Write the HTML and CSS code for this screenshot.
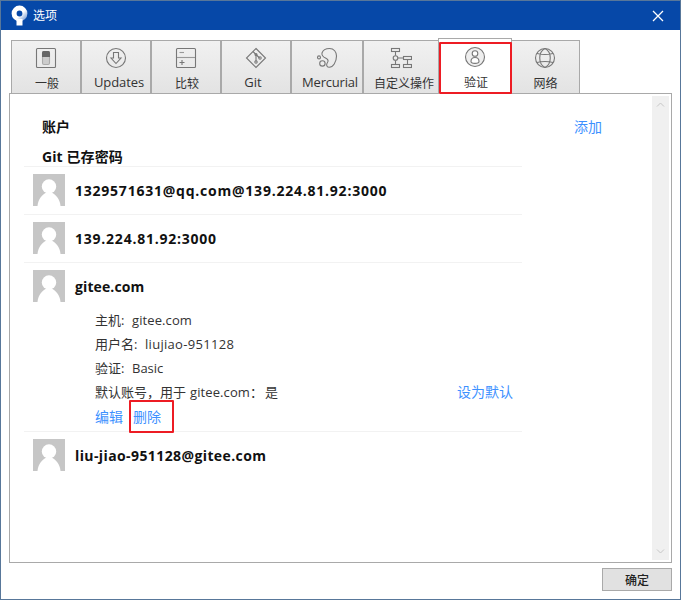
FILE: index.html
```
<!DOCTYPE html>
<html lang="zh-CN">
<head>
<meta charset="utf-8">
<title>选项</title>
<link rel="stylesheet" href="styles.css">
</head>
<body>
<svg class="defs" width="0" height="0" aria-hidden="true">
  <symbol id="avatar" viewBox="0 0 32 32"><rect width="32" height="32" fill="#c6c6c6"/><circle cx="16" cy="12.500" r="7.200" fill="#fff"/><path d="M4.500 32C5 25 9.500 20.500 12.500 19H19.500C22.500 20.500 27 25 27.500 32Z" fill="#fff"/></symbol>
</svg>
<div class="window">
  <header class="titlebar">
    <svg class="logo" width="18" height="22" viewBox="0 0 18 22"><defs><linearGradient id="lg" x1="0" y1="0" x2="1" y2="1"><stop offset=".6" stop-color="#fff"/><stop offset="1" stop-color="#8facda"/></linearGradient></defs><circle cx="8.500" cy="8.500" r="5.400" fill="none" stroke="url(#lg)" stroke-width="5"/><path d="M5.500 14H11.500V20.500H5.500Z" fill="#fff"/></svg>
    <span class="title">选项</span>
    <svg class="close" width="12" height="12" viewBox="0 0 12 12"><path d="M1 1L11 11M11 1L1 11" stroke="#fff" stroke-width="1.300"/></svg>
  </header>
  <nav class="tabs">
    <div class="tab"><svg class="icon" viewBox="0 0 22 22"><rect x="1.500" y="1.500" width="19" height="19" rx="1"/><rect x="7.500" y="4.500" width="7" height="13" rx="1.500" fill="#ccc" stroke="#aaa"/><path d="M7 5.500Q7 4 8.500 4H13.500Q15 4 15 5.500V10H7Z" fill="#666" stroke="none"/></svg><span class="label l-general">一般</span></div>
    <div class="tab"><svg class="icon" viewBox="0 0 22 22"><circle cx="11" cy="11" r="9.500"/><path d="M8.500 5.500H13.500V11H16L11 16.500L6 11H8.500Z"/></svg><span class="label l-updates">Updates</span></div>
    <div class="tab"><svg class="icon" viewBox="0 0 22 22"><rect x="1.500" y="1.500" width="19" height="19" rx="1"/><path d="M2 10.500H20" stroke="#999"/><path d="M4.500 5.500H9" stroke="#999"/><path d="M4.500 15.500H9.500M7 13V18"/></svg><span class="label l-compare">比较</span></div>
    <div class="tab"><svg class="icon" viewBox="0 0 22 22"><path d="M11 1.500L20.500 11L11 20.500L1.500 11Z"/><path d="M8 4.500L11 7.500V14.500M11 7.500L14.500 11"/><circle cx="11" cy="7.500" r="1"/><circle cx="11" cy="15" r="1.200"/><circle cx="15" cy="11" r="1.200"/></svg><span class="label l-git">Git</span></div>
    <div class="tab tab-mercurial"><svg class="icon" viewBox="0 0 22 22"><path d="M13 20.300C10.500 20 10 17.500 11.500 15.500C13 13.500 11.500 12 9.500 11C6.500 9.500 5.500 8 6 6C7 3 10 1.500 13.500 1.500C18 1.500 20.500 5 20.500 9C20.500 15 17 20.500 13 20.300Z"/><circle cx="6.400" cy="16.400" r="2.700"/><circle cx="3" cy="10.400" r="1.500"/></svg><span class="label l-mercurial">Mercurial</span></div>
    <div class="tab tab-custom"><svg class="icon" viewBox="0 0 22 22"><rect x="1.500" y="1.500" width="8" height="3"/><rect x="1.500" y="17.500" width="8" height="3"/><rect x="13.500" y="9.500" width="8" height="3"/><rect x="13.500" y="17.500" width="8" height="3"/><circle cx="5.500" cy="11" r="2.300"/><path d="M5.500 5V8.500M5.500 13.500V17M8 11H13M17.500 13V17"/></svg><span class="label l-custom">自定义操作</span></div>
    <div class="tab tab-active"><svg class="icon" viewBox="0 0 22 22"><circle cx="11" cy="11" r="9.500" fill="#eee"/><circle cx="11" cy="7.500" r="2.800" fill="#fff"/><path d="M7 15.500C7 13 8.500 11.500 11 11.500S15 13 15 15.500C15 18 7 18 7 15.500Z" fill="#fff"/></svg><span class="label l-auth">验证</span><i class="mark mark-tab"></i></div>
    <div class="tab tab-network"><svg class="icon" viewBox="0 0 22 22"><circle cx="11" cy="11" r="9.500"/><path d="M3 6.500Q11 8.500 19 6.500M3 15.500Q11 13.500 19 15.500M11 1.500C4 5 4 17 11 20.500M11 1.500C18 5 18 17 11 20.500"/></svg><span class="label l-network">网络</span></div>
  </nav>
  <main class="panel">
    <section class="content">
      <div class="heading"><h1>账户</h1><a class="link">添加</a></div>
      <h2>Git 已存密码</h2>
      <div class="accounts">
        <article class="account"><div class="head"><svg class="avatar"><use href="#avatar"/></svg><b class="name n1">1329571631@qq.com@139.224.81.92:3000</b></div></article>
        <article class="account"><div class="head"><svg class="avatar"><use href="#avatar"/></svg><b class="name n2">139.224.81.92:3000</b></div></article>
        <article class="account open"><div class="head"><svg class="avatar"><use href="#avatar"/></svg><b class="name n3">gitee.com</b></div>
          <div class="details">
            <div class="row"><span class="key k2">主机:</span><span class="v1">gitee.com</span></div>
            <div class="row"><span class="key k3">用户名:</span><span class="v2">liujiao-951128</span></div>
            <div class="row"><span class="key k2">验证:</span><span class="v3">Basic</span></div>
            <div class="row"><span class="key default-key">默认账号，用于</span><span class="v4">gitee.com：</span><span>是</span><a class="link set-default">设为默认</a></div>
            <div class="row actions"><a class="link">编辑</a><a class="link delete">删除<i class="mark mark-delete"></i></a></div>
          </div>
        </article>
        <article class="account last"><div class="head"><svg class="avatar"><use href="#avatar"/></svg><b class="name n4">liu-jiao-951128@gitee.com</b></div></article>
      </div>
    </section>
    <aside class="scrollbar"><svg width="9" height="5" viewBox="0 0 9 5"><path d="M1 4.500L4.500 1L8 4.500"/></svg><svg width="9" height="5" viewBox="0 0 9 5"><path d="M1 .5L4.500 4L8 .5"/></svg></aside>
  </main>
  <footer class="footer"><button>确定</button></footer>
</div>
</body>
</html>
```
FILE: styles.css
```
* { box-sizing: border-box; }
body { margin: 0; font-family: "Open Sans", "Noto Sans CJK SC", sans-serif; font-size: 13px; color: #333; }
.defs { position: absolute; }
.window { width: 681px; height: 600px; border: 1px solid #58779a; background: #fff; display: flex; flex-direction: column; overflow: hidden; }
.titlebar { height: 29px; flex: none; display: flex; align-items: center; background: #0648a8; color: #fff; padding: 0 16px 0 10px; }
.logo { margin-top: 1px; }
.title { margin-left: 4px; font-size: 12px; line-height: 20px; }
.close { margin-left: auto; margin-top: 1px; }
.tabs { display: flex; align-items: flex-end; height: 63px; flex: none; padding-left: 10px; }
.tab { width: 70px; height: 53px; flex: none; display: flex; flex-direction: column; align-items: center; border: 1px solid #a9a9a9; border-bottom: 0; background: linear-gradient(#f1f1f1, #e3e3e3); padding-top: 6px; }
.tab-mercurial { width: 72px; }
.tab-custom { width: 75px; border-right: 0; }
.tab-active { width: 74px; height: 56px; margin-bottom: -1px; padding-top: 7px; background: #fff; position: relative; z-index: 2; }
.tab-network { width: 68px; border-left: 0; }
.tab-network .icon { margin-right: 2px; }
.icon { width: 22px; height: 22px; fill: none; stroke: #777; stroke-width: 1.1; flex: none; }
.label { font-size: 12px; line-height: 18px; margin-top: 6px; white-space: nowrap; position: relative; }
.l-general { margin-left: 2px; }
.l-compare, .l-auth { margin-left: 2px; }
.l-updates, .l-git, .l-mercurial { font-size: 13px; margin-top: 4px; }
.l-updates { margin-left: 6px; letter-spacing: -.1px; }
.l-git { margin-right: 6px; }
.l-mercurial { margin-left: 6px; letter-spacing: -.2px; }
.l-custom { margin-left: 6px; }
.mark { position: absolute; border: 2px solid #ed1c24; border-radius: 1px; }
.mark-tab { left: 0; top: 3px; width: 73px; height: 52px; }
.mark-delete { left: -4px; top: -7px; width: 45px; height: 33px; }
.panel { width: 663px; height: 470px; flex: none; margin-left: 8px; border: 1px solid #a9a9a9; display: flex; justify-content: space-between; padding: 2px 2px 2px 14px; }
.content { width: 580px; padding-top: 21px; }
.heading { display: flex; justify-content: space-between; height: 20px; padding-left: 18px; padding-right: 2px; }
h1, h2 { margin: 0; font-size: 14px; line-height: 20px; color: #111; }
h2 { margin-top: 10px; height: 19px; padding-left: 18px; letter-spacing: .1px; }
.link { color: #3d91ff; font-size: 14px; line-height: 20px; }
.accounts { width: 498px; }
.account { height: 48px; border-top: 1px solid #f2f2f2; padding: 7px 0 0 9px; }
.account.open { height: 169px; }
.head { display: flex; align-items: center; gap: 10px; height: 32px; }
.avatar { width: 32px; height: 32px; flex: none; }
.name { font-size: 14px; line-height: 20px; color: #111; margin-top: 1px; white-space: nowrap; }
.n1, .n2 { letter-spacing: .77px; }
.n3 { letter-spacing: .1px; }
.n4 { letter-spacing: .4px; }
.details { padding: 6px 9px 0 62px; }
.row { height: 24px; display: flex; align-items: center; line-height: 20px; white-space: nowrap; }
.k2 { width: 37px; }
.k3 { width: 50px; }
.v1 { letter-spacing: .1px; }
.v2 { letter-spacing: .3px; }
.default-key { width: 95px; }
.v4 { width: 75px; letter-spacing: .1px; }
.set-default { margin-left: auto; }
.actions { gap: 10px; padding-top: 2px; }
.delete { position: relative; }
.scrollbar { width: 17px; height: 464px; background: #f0f0f0; display: flex; flex-direction: column; justify-content: space-between; align-items: center; padding: 6px 0; }
.scrollbar svg { fill: none; stroke: #c6c6c6; }
.footer { display: flex; justify-content: flex-end; padding: 5px 8px 0 0; }
button { width: 70px; height: 23px; border: 1px solid #a9a9a9; background: #e1e1e1; font: 500 12px/18px "Noto Sans CJK SC", sans-serif; color: #222; padding: 0; }
```
